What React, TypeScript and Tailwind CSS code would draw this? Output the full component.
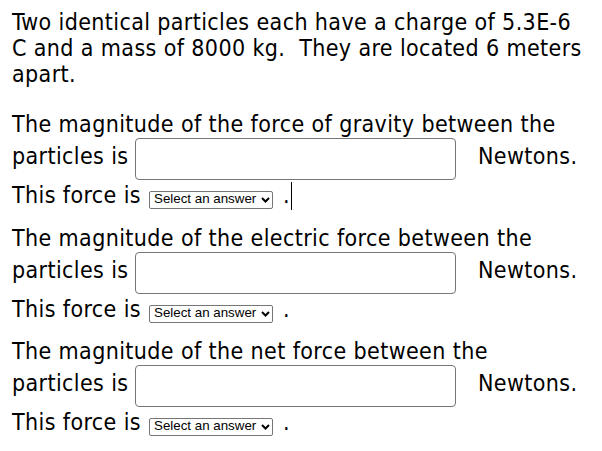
import { ChangeEvent, useState } from 'react';

const blocks = [
  { kind: 'gravity', caret: true },
  { kind: 'electric', caret: false },
  { kind: 'net', caret: false },
];

/** one question: magnitude input + direction select */
function ForceBlock({ kind, caret, first }: { kind: string; caret: boolean; first: boolean }) {
  const [value, setValue] = useState('');
  const [choice, setChoice] = useState('');

  return (
    <div className={first ? 'mt-[24px]' : 'mt-[15px]'}>
      <div className="h-[26px] whitespace-nowrap">
        The magnitude of the {kind === 'gravity' ? 'force of gravity' : kind === 'electric' ? 'electric force' : 'net force'} between the
      </div>

      {/* 数值输入 */}
      <div className="mt-[1px] flex items-baseline whitespace-nowrap">
        <span className="w-[123px]">particles is</span>
        <input
          type="text"
          value={value}
          onChange={(e: ChangeEvent<HTMLInputElement>) => setValue(e.target.value)}
          className="w-[321px] h-[42px] border border-[#767676] rounded-[4px] bg-white px-[3px] text-[13.33px] tracking-normal font-['Liberation_Sans',Arial,sans-serif] outline-none"
        />
        <span className="ml-[22px]">Newtons.</span>
      </div>

      {/* 方向选择 */}
      <div className="mt-[2px] flex items-baseline whitespace-nowrap">
        <span className="w-[137px]">This force is</span>
        <div className="relative flex w-[124px] leading-[14px] text-[13.33px] tracking-normal">
          <select
            value={choice}
            onChange={(e: ChangeEvent<HTMLSelectElement>) => setChoice(e.target.value)}
            className="appearance-none w-[124px] h-[18px] border border-[#767676] rounded-[2px] bg-white pl-[4px] pt-0 pb-[2px] leading-[14px] text-[13.33px] text-black font-['Liberation_Sans',Arial,sans-serif]"
          >
            <option value="">Select an answer</option>
            <option value="attractive">attractive</option>
            <option value="repulsive">repulsive</option>
          </select>
          <svg className="absolute right-[3px] top-[6px] pointer-events-none" width="9" height="6" viewBox="0 0 9 6" fill="none">
            <path d="M1 1L4.5 4.5L8 1" stroke="#000" strokeWidth={2} />
          </svg>
        </div>
        <span className="ml-[10px]">.</span>
        {caret && <span className="self-start ml-[1px] w-px h-[28px] bg-black" />}
      </div>
    </div>
  );
}

export default function App() {
  return (
    <div className="w-[602px] h-[451px] bg-white pl-3 pt-[9px] text-[23px] leading-[26px] tracking-[0.38px] text-black font-['DejaVu_Sans_Condensed','DejaVu_Sans',sans-serif] overflow-hidden">
      <p className="whitespace-nowrap">
        Two identical particles each have a charge of 5.3E-6
        <br />
        C and a mass of 8000 kg.{'\u00a0'} They are located 6 meters
        <br />
        apart.
      </p>

      {blocks.map((b, i) => (
        <ForceBlock key={b.kind} kind={b.kind} caret={b.caret} first={i === 0} />
      ))}
    </div>
  );
}
